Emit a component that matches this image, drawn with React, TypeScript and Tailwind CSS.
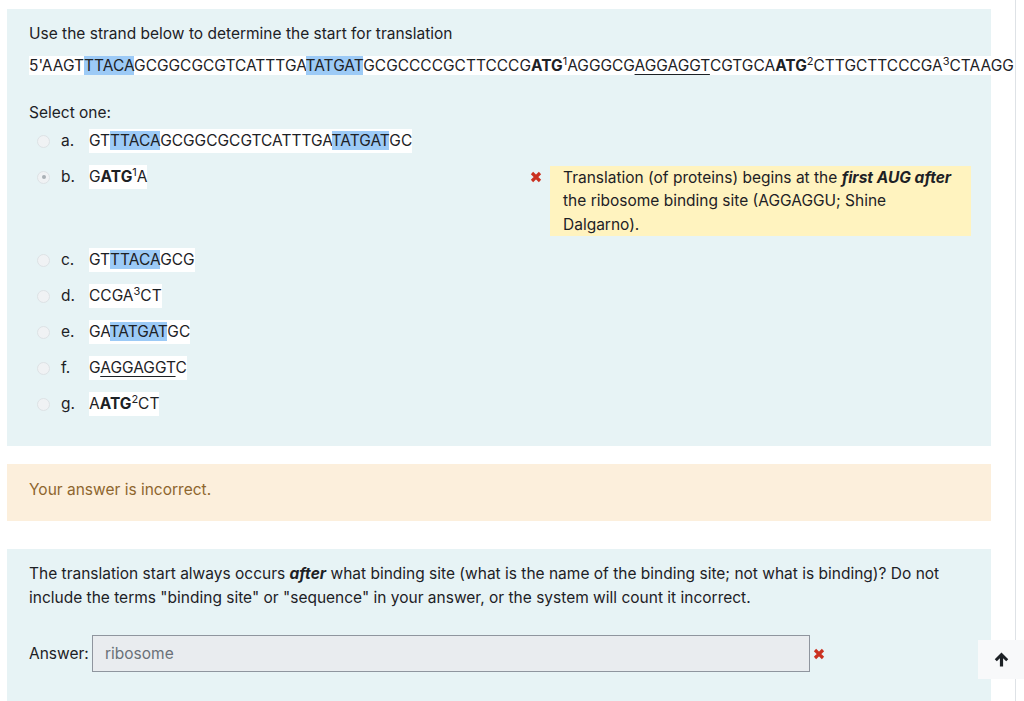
import React from "react";

const font = { fontFamily: "Inter, 'Noto Sans', sans-serif" };

function Hl({ children }: { children: React.ReactNode }) {
  return <span className="bg-[#9ccaf6]">{children}</span>;
}

function Sup({ n }: { n: string }) {
  return <sup className="text-[11px] -top-[0.55em]">{n}</sup>;
}

function XMark({ className = "" }: { className?: string }) {
  return (
    <svg viewBox="0 0 12 12" className={`w-[12px] h-[12px] ${className}`}>
      <path d="M2 2 L10 10 M10 2 L2 10" stroke="#ca3120" strokeWidth="3.2" strokeLinecap="butt" />
    </svg>
  );
}

function Radio({ checked }: { checked?: boolean }) {
  return (
    <span className="ml-[8px] w-[13px] h-[13px] rounded-full border border-[#dde2e5] bg-[#f0f2f4] flex items-center justify-center shrink-0">
      {checked && <span className="w-[4px] h-[4px] rounded-full bg-[#a9b0b5]" />}
    </span>
  );
}

const options: { key: string; text: React.ReactNode }[] = [
  {
    key: "a",
    text: (
      <>
        GT<Hl>TTACA</Hl>GCGGCGCGTCATTTGA<Hl>TATGAT</Hl>GC
      </>
    ),
  },
  {
    key: "b",
    text: (
      <>
        G<b>ATG</b>
        <Sup n="1" />A
      </>
    ),
  },
  {
    key: "c",
    text: (
      <>
        GT<Hl>TTACA</Hl>GCG
      </>
    ),
  },
  {
    key: "d",
    text: (
      <>
        CCGA<Sup n="3" />CT
      </>
    ),
  },
  {
    key: "e",
    text: (
      <>
        GA<Hl>TATGAT</Hl>GC
      </>
    ),
  },
  {
    key: "f",
    text: (
      <>
        G<span className="underline underline-offset-[3px]">AGGAGGT</span>C
      </>
    ),
  },
  {
    key: "g",
    text: (
      <>
        A<b>ATG</b>
        <Sup n="2" />CT
      </>
    ),
  },
];

export default function App() {
  return (
    <div className="relative min-h-[701px] bg-white text-[#1d2125] text-[15.5px] leading-[24px] flex overflow-hidden" style={font}>
      <div className="w-[984px] ml-[7px] shrink-0">
        {/* Question */}
        <div className="mt-[9px] bg-[#e7f3f5] pl-[22px] pr-[20px] pt-[13px] pb-[30px]">
          <p>Use the strand below to determine the start for translation</p>
          <p className="mt-[8px] whitespace-nowrap">
            <span className="bg-white">
              5'AAGT<Hl>TTACA</Hl>GCGGCGCGTCATTTGA<Hl>TATGAT</Hl>GCGCCCCGCTTCCCG<b>ATG</b>
              <Sup n="1" />AGGGCG<span className="underline underline-offset-[3px]">AGGAGGT</span>CGTGCA<b>ATG</b>
              <Sup n="2" />CTTGCTTCCCGA<Sup n="3" />CTAAGG
            </span>
          </p>
          <p className="mt-[23px]">Select one:</p>
          <div className="mt-[4px] flex flex-col gap-[12px]">
            {options.map((o) => (
              <div key={o.key} className="flex items-start">
                <div className="flex items-center h-[24px] w-[499px] shrink-0">
                  <Radio checked={o.key === "b"} />
                  <span className="ml-[11px] w-[28px]">{o.key}.</span>
                  <span className="bg-white whitespace-nowrap">{o.text}</span>
                </div>
                {o.key === "b" && (
                  <>
                    <div className="w-[22px] h-[24px] flex items-center pl-[2px]">
                      <XMark />
                    </div>
                    <div className="flex-1 bg-[#fff3bf] px-[13px] mt-[1px] leading-[23.4px]">
                      Translation (of proteins) begins at the <b><i>first AUG after</i></b> the ribosome binding site (AGGAGGU; Shine Dalgarno).
                    </div>
                  </>
                )}
              </div>
            ))}
          </div>
        </div>

        {/* Outcome */}
        <div className="mt-[18px] bg-[#fcefdc] text-[#8e662e] px-[22px] pt-[14px] pb-[19px]">
          Your answer is incorrect.
        </div>

        {/* Second question */}
        <div className="mt-[28px] bg-[#e7f3f5] pl-[22px] pr-[20px] pt-[13px] pb-[29px]">
          <p>
            The translation start always occurs <b><i>after</i></b> what binding site (what is the name of the binding site; not what is binding)? Do not include the terms "binding site" or "sequence" in your answer, or the system will count it incorrect.
          </p>
          <div className="mt-[25px] flex items-center">
            <span className="w-[63px]">Answer:</span>
            <div className="w-[718px] h-[37px] bg-[#e9ecef] border border-[#8f959e] flex items-center px-[12px] text-[#6a7178]">
              ribosome
            </div>
            <XMark className="ml-[3px]" />
          </div>
        </div>
      </div>

      <div className="ml-[24px] border-l border-[#dee2e6] flex-1" />

      {/* back to top */}
      <button className="absolute left-[978px] top-[640px] w-[46px] h-[39px] bg-[#f8f9fa] flex items-center justify-center">
        <svg viewBox="0 0 16 16" className="w-[15px] h-[15px]">
          <path d="M8 0.5 L15.2 7.7 L13 9.9 L9.7 6.6 V15.5 H6.3 V6.6 L3 9.9 L0.8 7.7 Z" fill="#1d2125" />
        </svg>
      </button>
    </div>
  );
}
